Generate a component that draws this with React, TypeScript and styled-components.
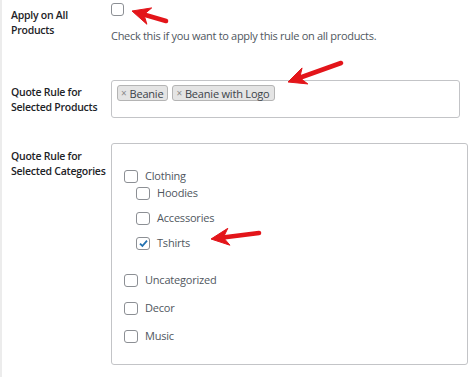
import React from 'react';
import styled, { createGlobalStyle } from 'styled-components';

const GlobalStyle = createGlobalStyle`
  html, body {
    margin: 0;
    padding: 0;
    background: #fff;
  }
  body {
    font-family: 'Open Sans', 'Liberation Sans', sans-serif;
  }
`;

type Arrow = { tip: [number, number]; tail: [number, number] };

const arrows: Arrow[] = [
  { tip: [130, 11], tail: [164, 21] },
  { tip: [286, 82], tail: [339, 63] },
  { tip: [209, 239], tail: [257, 233] },
];

const categories = [
  { name: 'Clothing', depth: 0, checked: false, gap: 6 },
  { name: 'Hoodies', depth: 1, checked: false, gap: 3 },
  { name: 'Accessories', depth: 1, checked: false, gap: 11 },
  { name: 'Tshirts', depth: 1, checked: true, gap: 11 },
  { name: 'Uncategorized', depth: 0, checked: false, gap: 23 },
  { name: 'Decor', depth: 0, checked: false, gap: 14 },
  { name: 'Music', depth: 0, checked: false, gap: 14 },
];

// builds the head polygon and shaft line of a hand-drawn looking arrow
function arrowPoints({ tip, tail }: Arrow) {
  const dx = tail[0] - tip[0];
  const dy = tail[1] - tip[1];
  const len = Math.sqrt(dx * dx + dy * dy);
  const ux = dx / len;
  const uy = dy / len;
  const nx = -uy;
  const ny = ux;
  const head = 18;
  const hw = 8.5;
  const sw = 2.4;
  const bx = tip[0] + ux * head;
  const by = tip[1] + uy * head;
  const nb = tip[0] + ux * (head - 4);
  const nby = tip[1] + uy * (head - 4);
  return {
    head: `${tip[0]},${tip[1]} ${bx + nx * hw},${by + ny * hw} ${nb + nx * sw},${nby + ny * sw} ${nb - nx * sw},${nby - ny * sw} ${bx - nx * hw},${by - ny * hw}`,
    shaft: { x1: nb, y1: nby, x2: tail[0], y2: tail[1] },
  };
}

function App() {
  return (
    <>
      <GlobalStyle />
      <Page>
        <Row $top={3}>
          <Label $top={5}>
            Apply on All
            <br />
            Products
          </Label>
          <Field>
            <Box />
            <Description>Check this if you want to apply this rule on all products.</Description>
          </Field>
        </Row>
        <Row $top={37}>
          <Label $top={5}>
            Quote Rule for
            <br />
            Selected Products
          </Label>
          <SelectBox>
            <Tag>
              <TagX>×</TagX>Beanie
            </Tag>
            <Tag>
              <TagX>×</TagX>Beanie with Logo
            </Tag>
          </SelectBox>
        </Row>
        <Row $top={25}>
          <Label $top={6}>
            Quote Rule for
            <br />
            Selected Categories
          </Label>
          <CategoryBox>
            {categories.map((c) => (
              <CategoryItem key={c.name} $depth={c.depth} $gap={c.gap}>
                <Box $checked={c.checked}>
                  {c.checked && (
                    <svg width="11" height="11" viewBox="0 0 11 11">
                      <path d="M2 5.6 L4.4 8 L9 2.6" fill="none" stroke="#2271b1" strokeWidth="1.8" />
                    </svg>
                  )}
                </Box>
                <CategoryName>{c.name}</CategoryName>
              </CategoryItem>
            ))}
          </CategoryBox>
        </Row>
        <Overlay width="474" height="377" viewBox="0 0 474 377">
          {arrows.map((a, i) => {
            const p = arrowPoints(a);
            return (
              <g key={i} fill="#e3151a" stroke="#e3151a">
                <line {...p.shaft} strokeWidth="4.6" strokeLinecap="round" />
                <polygon points={p.head} strokeWidth="1" strokeLinejoin="round" />
              </g>
            );
          })}
        </Overlay>
      </Page>
    </>
  );
}

const Page = styled.div`
  position: relative;
  width: 474px;
  height: 377px;
  box-sizing: border-box;
  border-left: 2px solid #ececec;
  padding-left: 9px;
  overflow: hidden;
`;

const Row = styled.div<{ $top: number }>`
  display: flex;
  margin-top: ${({ $top }) => $top}px;
`;

const Label = styled.div<{ $top: number }>`
  width: 100px;
  flex-shrink: 0;
  padding-top: ${({ $top }) => $top}px;
  font-size: 10.5px;
  font-weight: 600;
  letter-spacing: -0.25px;
  line-height: 14.5px;
  white-space: nowrap;
  color: #1d2327;
`;

const Field = styled.div`
  display: flex;
  flex-direction: column;
  align-items: flex-start;
`;

const Box = styled.span<{ $checked?: boolean }>`
  display: inline-flex;
  align-items: center;
  justify-content: center;
  width: 11px;
  height: 11px;
  border: 1px solid #8c8f94;
  border-radius: 3px;
  background: #fff;
  flex-shrink: 0;
`;

const Description = styled.p`
  margin: 13px 0 0;
  font-size: 11px;
  letter-spacing: -0.3px;
  line-height: 14px;
  color: #50575e;
  white-space: nowrap;
`;

const SelectBox = styled.div`
  width: 349px;
  height: 38px;
  box-sizing: border-box;
  border: 1px solid #c3c4c7;
  border-radius: 3px;
  padding: 4px 5px;
  display: flex;
  align-items: flex-start;
  gap: 4px;
`;

const Tag = styled.span`
  display: inline-flex;
  align-items: center;
  height: 16px;
  box-sizing: border-box;
  padding: 0 4px 0 3px;
  border: 1px solid #b4b4b4;
  border-radius: 3px;
  background: #e4e4e4;
  font-size: 11px;
  letter-spacing: -0.2px;
  color: #3c434a;
  white-space: nowrap;
`;

const TagX = styled.span`
  font-size: 10px;
  color: #8a8a8a;
  margin-right: 3px;
`;

const CategoryBox = styled.div`
  width: 357px;
  height: 222px;
  box-sizing: border-box;
  border: 1px solid #c3c4c7;
  border-radius: 3px;
  padding: 19px 12px;
  display: flex;
  flex-direction: column;
`;

const CategoryItem = styled.div<{ $depth: number; $gap: number }>`
  display: flex;
  align-items: center;
  gap: 7px;
  height: 14px;
  margin-left: ${({ $depth }) => $depth * 12}px;
  margin-top: ${({ $gap }) => $gap}px;
  &:first-child {
    margin-top: 6px;
  }
  ${Box} {
    width: 12px;
    height: 11px;
  }
`;

const CategoryName = styled.span`
  font-size: 11px;
  letter-spacing: -0.2px;
  color: #50575e;
  line-height: 14px;
`;

const Overlay = styled.svg`
  position: absolute;
  left: 0;
  top: 0;
  pointer-events: none;
`;

export default App;
